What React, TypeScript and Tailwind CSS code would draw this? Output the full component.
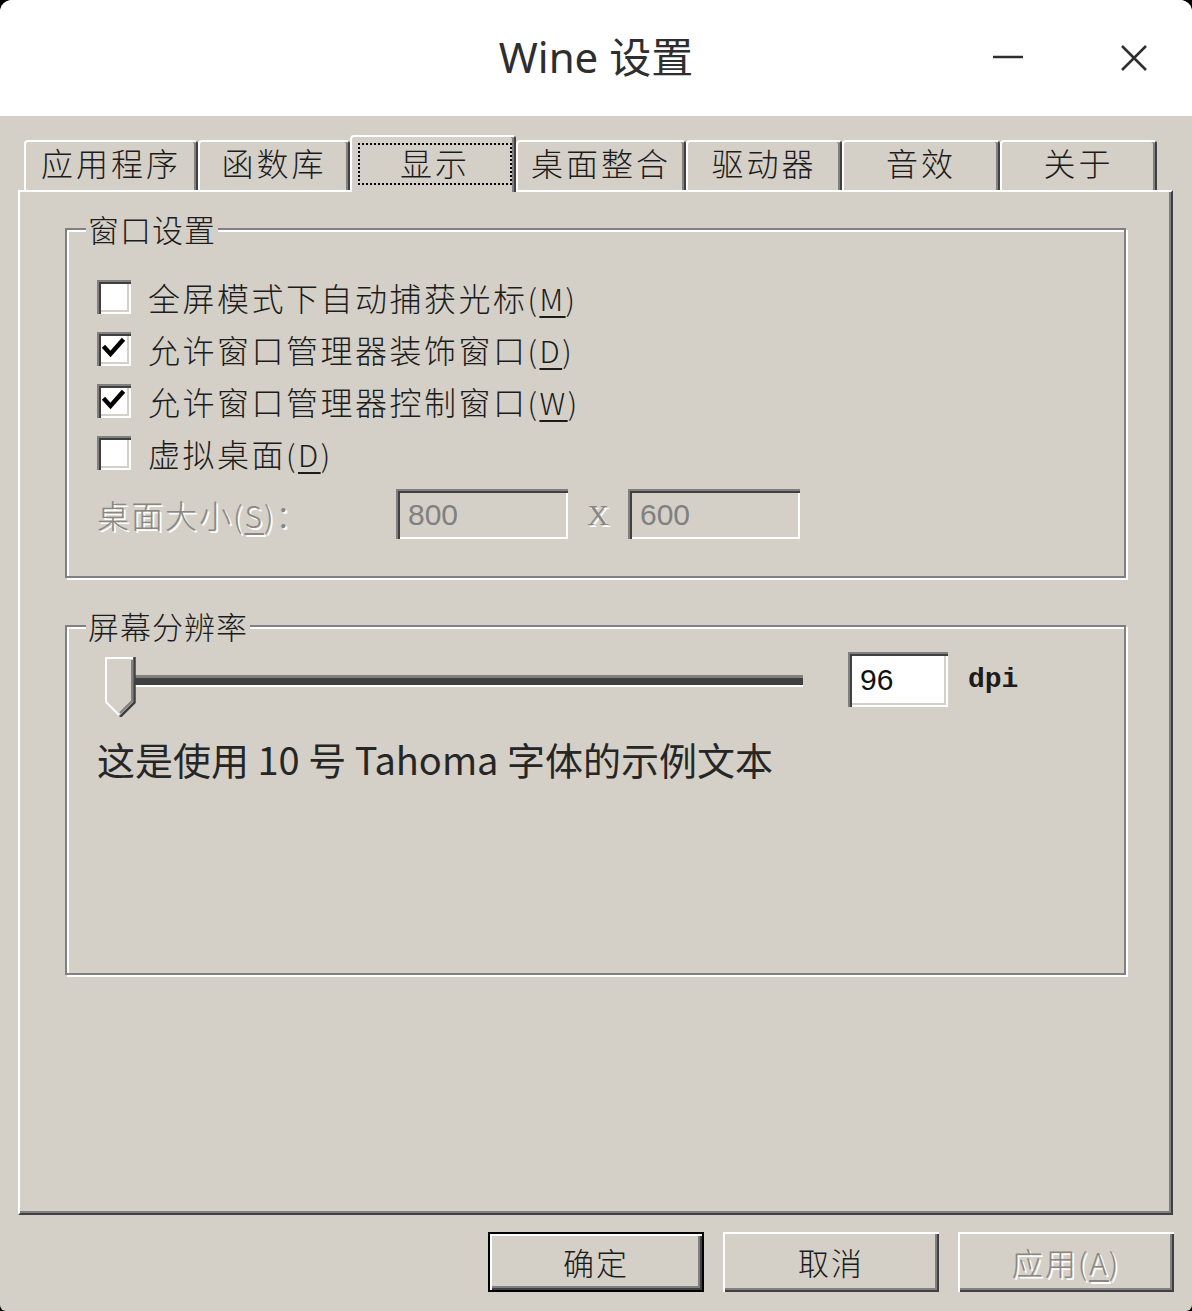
import type { ReactNode } from 'react'

const cjk = "font-['Noto_Sans_CJK_SC',sans-serif]"
const raised = 'shadow-[inset_2px_2px_0_#fff,inset_-2px_-2px_0_#404040,inset_-4px_-4px_0_#808080]'
const sunken =
  'shadow-[inset_2px_2px_0_#808080,inset_4px_4px_0_#404040,inset_-2px_-2px_0_#fff,inset_-4px_-4px_0_#d4d0c8]'

const tabs = [
  { label: '应用程序', w: 'w-[174px]' },
  { label: '函数库', w: 'w-[152px]' },
  { label: '显示', w: 'w-[166px]', active: true },
  { label: '桌面整合', w: 'w-[170px]' },
  { label: '驱动器', w: 'w-[156px]' },
  { label: '音效', w: 'w-[158px]' },
  { label: '关于', w: 'w-[157px]' },
]

const Key = ({ k }: { k: string }) => (
  <span className="text-[30px]">
    (<span className="underline decoration-2 underline-offset-[5px]">{k}</span>)
  </span>
)

const Check = ({ checked, children }: { checked?: boolean; children: ReactNode }) => (
  <div className="flex h-[52px] items-center gap-[17px]">
    <div className={`grid h-[34px] w-[34px] place-items-center bg-white ${sunken}`}>
      {checked && (
        <svg width="34" height="34" viewBox="0 0 34 34" aria-hidden="true">
          <path d="M8 16 L13.5 22 L25 9" fill="none" stroke="#000" strokeWidth="4.5" strokeLinecap="square" />
        </svg>
      )}
    </div>
    <span className="text-[32px] font-light leading-none tracking-[2.5px] text-[#1c1c1c]">{children}</span>
  </div>
)

const Group = ({ title, children, className }: { title: string; children: ReactNode; className: string }) => (
  <fieldset
    className={`mx-[45px] border-2 border-[#808080] shadow-[inset_2px_2px_0_#fff,2px_2px_0_#fff] ${className}`}
  >
    <legend className="ml-[19px] bg-[#d4d0c8] px-[2px] text-[31px] font-light leading-[36px] tracking-[1px] text-[#1c1c1c]">
      {title}
    </legend>
    {children}
  </fieldset>
)

const Button = ({ children, primary, disabled }: { children: ReactNode; primary?: boolean; disabled?: boolean }) => (
  <button
    type="button"
    className={`h-[60px] w-[216px] ${primary ? 'border-2 border-black' : ''} bg-[#d4d0c8] ${raised} text-[31px] font-light tracking-[2px] ${
      disabled ? 'text-[#8a8782] [text-shadow:2px_2px_0_#fff]' : 'text-[#1c1c1c]'
    }`}
  >
    {children}
  </button>
)

export default function App() {
  return (
    <div className={`h-[1311px] w-[1192px] bg-black ${cjk}`}>
      <div className="flex h-full w-full flex-col overflow-hidden rounded-t-[12px] rounded-b-[6px] bg-[#d4d0c8]">
        <header className="relative flex h-[116px] shrink-0 items-center justify-center bg-white">
          <h1 className="pb-[2px] font-['Noto_Sans','Noto_Sans_CJK_SC',sans-serif] text-[42px] leading-none text-[#2e2e2e]">
            Wine 设置
          </h1>
          <div className="absolute right-[44px] top-[44px] flex items-center gap-[96px]">
            <svg width="32" height="28" viewBox="0 0 32 28" aria-hidden="true">
              <path d="M1 13 H31" stroke="#2e2e2e" strokeWidth="2.5" />
            </svg>
            <svg width="28" height="28" viewBox="0 0 28 28" aria-hidden="true">
              <path d="M2 2 L26 26 M26 2 L2 26" stroke="#2e2e2e" strokeWidth="2.5" />
            </svg>
          </div>
        </header>

        <div className="flex flex-1 flex-col px-[18px] pt-[19px]">
          <div className="flex h-[55px] items-end pl-[6px]">
            {tabs.map((t) =>
              t.active ? (
                <div
                  key={t.label}
                  className={`relative z-10 -mb-[2px] flex h-[57px] ${t.w} rounded-t-[4px] border-l-2 border-r-2 border-t-2 border-l-white border-r-[#404040] border-t-white bg-[#d4d0c8] pb-[7px] pl-[6px] pr-[2px] pt-[6px] shadow-[inset_-2px_0_0_#808080]`}
                >
                  <div className="flex flex-1 items-center justify-center border-2 border-dotted border-black pb-[4px] text-[32px] font-light leading-none tracking-[3px] text-[#1c1c1c]">
                    {t.label}
                  </div>
                </div>
              ) : (
                <div
                  key={t.label}
                  className={`flex h-[50px] ${t.w} items-center justify-center rounded-t-[4px] border-l-2 border-r-2 border-t-2 border-l-white border-r-[#404040] border-t-white pb-[8px] text-[32px] font-light leading-none tracking-[3px] text-[#1c1c1c] shadow-[inset_-2px_0_0_#808080]`}
                >
                  {t.label}
                </div>
              ),
            )}
          </div>

          <section className="flex h-[1025px] w-[1155px] flex-col border-2 border-b-[#404040] border-l-white border-r-[#404040] border-t-white pt-[19px] shadow-[inset_-2px_-2px_0_#808080]">
            <Group title="窗口设置" className="h-[367px]">
              <div className="flex flex-col pl-[30px] pt-[24px]">
                <Check>
                  全屏模式下自动捕获光标<Key k="M" />
                </Check>
                <Check checked>
                  允许窗口管理器装饰窗口<Key k="D" />
                </Check>
                <Check checked>
                  允许窗口管理器控制窗口<Key k="W" />
                </Check>
                <Check>
                  虚拟桌面<Key k="D" />
                </Check>
                <div className="mt-[10px] flex h-[50px] items-center">
                  <span className="w-[299px] text-[32px] font-light leading-none tracking-[2px] text-[#8a8782] [text-shadow:2px_2px_0_#fff]">
                    桌面大小<Key k="S" />：
                  </span>
                  <div
                    className={`flex h-[50px] w-[172px] items-center pl-[12px] font-['Liberation_Sans',sans-serif] text-[30px] text-[#808080] ${sunken}`}
                  >
                    800
                  </div>
                  <span className="w-[60px] text-center font-['Liberation_Serif',serif] text-[30px] text-[#8a8782] [text-shadow:2px_2px_0_#fff]">
                    X
                  </span>
                  <div
                    className={`flex h-[50px] w-[172px] items-center pl-[12px] font-['Liberation_Sans',sans-serif] text-[30px] text-[#808080] ${sunken}`}
                  >
                    600
                  </div>
                </div>
              </div>
            </Group>

            <Group title="屏幕分辨率" className="mt-[30px] h-[367px]">
              <div className="flex flex-col pl-[30px] pt-[8px]">
                <div className="flex items-start">
                  <div className="relative mt-[5px] h-[60px] w-[706px]">
                    <div className="ml-[12px] mt-[18px] h-[12px] border-b-2 border-t-[3px] border-b-white border-t-[#808080] bg-[#404040]" />
                    <svg
                      className="absolute left-[8px] top-0"
                      width="32"
                      height="60"
                      viewBox="0 0 32 60"
                      aria-hidden="true"
                    >
                      <path d="M1 1 H29 V45 L15 59 L1 45 Z" fill="#d4d0c8" />
                      <path d="M1 45 V1 H28" fill="none" stroke="#fff" strokeWidth="2" />
                      <path d="M1 45 L14 58" fill="none" stroke="#fff" strokeWidth="2" />
                      <path d="M27 3 V44 L15 56" fill="none" stroke="#808080" strokeWidth="2" />
                      <path d="M29.5 0 V45.5 L15 60" fill="none" stroke="#404040" strokeWidth="2.5" />
                    </svg>
                  </div>
                  <div
                    className={`ml-[45px] flex h-[55px] w-[100px] items-center bg-white pl-[12px] font-['Liberation_Sans',sans-serif] text-[30px] text-[#111] ${sunken}`}
                  >
                    96
                  </div>
                  <span className="ml-[20px] mt-[10px] font-['Liberation_Mono',monospace] text-[28px] font-semibold leading-[36px] text-[#1c1c1c]">
                    dpi
                  </span>
                </div>
                <p className="mt-[20px] text-[38px] leading-[44px] text-[#262626]">
                  这是使用 10 号 Tahoma 字体的示例文本
                </p>
              </div>
            </Group>
          </section>

          <div className="flex justify-end gap-[19px] pt-[17px]">
            <Button primary>确定</Button>
            <Button>取消</Button>
            <Button disabled>
              应用<Key k="A" />
            </Button>
          </div>
        </div>
      </div>
    </div>
  )
}
